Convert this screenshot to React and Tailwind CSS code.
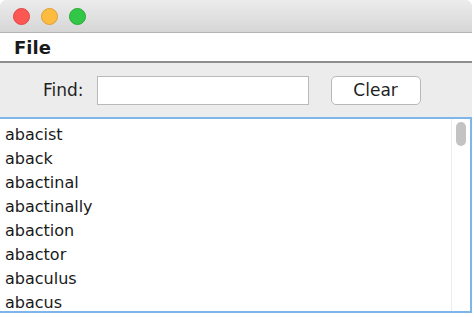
import React from "react";

const words = ["abacist","aback","abactinal","abactinally","abaction","abactor","abaculus","abacus"];

export default function App() {
  return (
    <div className="w-[474px] h-[317px] bg-white overflow-hidden" style={{fontFamily: '"DejaVu Sans", "Liberation Sans", sans-serif'}}>
      <div className="w-[472px] rounded-t-[6px] overflow-hidden">
        <div className="h-[33px] flex items-center pl-[13px] gap-[11px] bg-gradient-to-b from-[#ececec] to-[#d6d6d6] border-b border-[#b4b4b4]">
          <div className="w-[17px] h-[17px] rounded-full bg-[#fc5753] border border-[#df4744]"></div>
          <div className="w-[17px] h-[17px] rounded-full bg-[#fdbc40] border border-[#de9f34]"></div>
          <div className="w-[17px] h-[17px] rounded-full bg-[#33c748] border border-[#27aa35]"></div>
        </div>
        <div className="h-[30px] bg-white border-b-[2px] border-[#8e8e8e] flex items-center pl-[14px] pt-[2px]">
          <span className="text-[18px] font-bold text-[#1a1a1a] leading-none">File</span>
        </div>
        <div className="h-[54px] bg-[#ececec] flex items-center">
          <span className="ml-[43px] text-[17px] text-[#1f1f1f] leading-none">Find:</span>
          <div className="ml-[13px] w-[212px] h-[29px] bg-white border border-[#b9b9b9]"></div>
          <button className="ml-[22px] w-[90px] h-[29px] bg-white border border-[#b8b8b8] rounded-[5px] text-[17px] text-[#1f1f1f] leading-none flex items-center justify-center">Clear</button>
        </div>
        <div className="h-[196px] bg-white border-t-[2px] border-b-[2px] border-r-[2px] border-[#7fb6ea] flex overflow-hidden">
          <div className="flex-1 flex flex-col pt-[4px] overflow-hidden">
            {words.map((w) => (
              <div key={w} className="h-[24px] shrink-0 flex items-center pl-[5px] text-[16px] text-[#1a1a1a] leading-none">{w}</div>
            ))}
          </div>
          <div className="w-[19px] border-l border-[#ececec] flex justify-center pt-[3px]">
            <div className="w-[10px] h-[24px] rounded-full bg-[#c3c3c3]"></div>
          </div>
        </div>
      </div>
    </div>
  );
}
